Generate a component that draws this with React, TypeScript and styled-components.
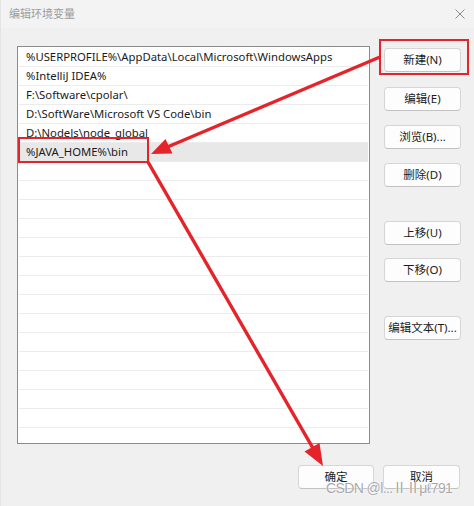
import React from "react";
import styled, { createGlobalStyle } from "styled-components";

const GlobalStyle = createGlobalStyle`
  html, body { margin: 0; padding: 0; background: #f0f0f0; }
  * { box-sizing: border-box; }
`;

const Window = styled.div`
  position: relative;
  width: 474px;
  height: 506px;
  overflow: hidden;
  background: #f0f0f0;
  border-left: 1px solid #e4e4e4;
  font-family: "Noto Sans", "Noto Sans CJK SC", sans-serif;
`;

const TitleBar = styled.div`
  height: 28px;
  display: flex;
  align-items: center;
  justify-content: space-between;
  padding: 0 9px 2px 8px;
  background: #f3f3f3;
`;

const Title = styled.span`
  font-family: "Noto Sans CJK SC", sans-serif;
  font-size: 11px;
  color: #9c9c9c;
`;

const CloseIcon = styled.svg`
  width: 10px;
  height: 10px;
  margin-top: 1px;
`;

const Content = styled.div`
  display: flex;
  gap: 14px;
  padding: 18px 0 0 16px;
`;

const ListBox = styled.div`
  width: 353px;
  height: 398px;
  border: 1px solid #8c8c8c;
  background: #ffffff;
  padding: 1px 1px;
  overflow: hidden;
`;

const Row = styled.div<{ $selected?: boolean }>`
  height: 19px;
  line-height: 18px;
  padding-left: 7px;
  border-bottom: 1px solid #ececec;
  font-size: 11.3px;
  color: #1a1a1a;
  white-space: nowrap;
  background: ${(p) => (p.$selected ? "#e8e8e8" : "#ffffff")};
`;

const ButtonColumn = styled.div`
  display: flex;
  flex-direction: column;
  width: 77px;
  padding-top: 2px;
`;

const DlgButton = styled.button<{ $mt?: number; $w?: number }>`
  width: ${(p) => p.$w ?? 77}px;
  height: 24px;
  margin-top: ${(p) => p.$mt ?? 0}px;
  background: #fdfdfd;
  border: 1px solid #d6d6d6;
  border-bottom-color: #c2c2c2;
  border-radius: 4px;
  font-family: "Noto Sans", "Noto Sans CJK SC", sans-serif;
  font-size: 11.5px;
  color: #1b1b1b;
  padding: 0;
  line-height: 22px;
`;

const Footer = styled.div`
  display: flex;
  justify-content: flex-end;
  gap: 9px;
  padding: 21px 14px 0 0;
`;

const Overlay = styled.svg`
  position: absolute;
  left: 0;
  top: 0;
  pointer-events: none;
`;

const Watermark = styled.div`
  position: absolute;
  left: 325px;
  top: 480px;
  font-family: "Liberation Sans", "Noto Sans CJK SC", sans-serif;
  font-size: 14px;
  line-height: 17px;
  letter-spacing: -0.6px;
  color: rgba(110, 110, 110, 0.6);
  text-shadow: 0 0 1px #ffffff, 0 0 2px #ffffff;
  white-space: nowrap;
`;

const paths = [
  "%USERPROFILE%\\AppData\\Local\\Microsoft\\WindowsApps",
  "%IntelliJ IDEA%",
  "F:\\Software\\cpolar\\",
  "D:\\SoftWare\\Microsoft VS Code\\bin",
  "D:\\NodeJs\\node_global",
  "%JAVA_HOME%\\bin",
];

const RED = "#e5232b";

export default function App() {
  const rows = [...paths, ...Array(16).fill("")];
  return (
    <>
      <GlobalStyle />
      <Window>
        <TitleBar>
          <Title>编辑环境变量</Title>
          <CloseIcon viewBox="0 0 10 10">
            <path d="M0.5 0.5 L9.5 9.5 M9.5 0.5 L0.5 9.5" stroke="#8a8a8a" strokeWidth="1" />
          </CloseIcon>
        </TitleBar>
        <Content>
          <ListBox>
            {rows.map((r, i) => (
              <Row key={i} $selected={i === 5}>
                {r}
              </Row>
            ))}
          </ListBox>
          <ButtonColumn>
            <DlgButton>新建(N)</DlgButton>
            <DlgButton $mt={15}>编辑(E)</DlgButton>
            <DlgButton $mt={14}>浏览(B)...</DlgButton>
            <DlgButton $mt={14}>删除(D)</DlgButton>
            <DlgButton $mt={34}>上移(U)</DlgButton>
            <DlgButton $mt={13}>下移(O)</DlgButton>
            <DlgButton $mt={34}>编辑文本(T)...</DlgButton>
          </ButtonColumn>
        </Content>
        <Footer>
          <DlgButton $w={76}>确定</DlgButton>
          <DlgButton>取消</DlgButton>
        </Footer>
        <Watermark>CSDN @l...ⅡⅡμℓ791</Watermark>
        <Overlay width="474" height="506" viewBox="0 0 474 506">
          <rect x="379" y="40" width="88" height="34" fill="none" stroke={RED} strokeWidth="2" />
          <rect x="18" y="138" width="129" height="24" fill="none" stroke={RED} strokeWidth="2" />
          <line x1="379" y1="57" x2="164" y2="148" stroke={RED} strokeWidth="3.5" />
          <polygon points="150,154 171.5,153.5 164.5,139" fill={RED} />
          <line x1="147" y1="162" x2="313" y2="450" stroke={RED} strokeWidth="3.5" />
          <polygon points="322,466 318.5,443 303.5,451.5" fill={RED} />
        </Overlay>
      </Window>
    </>
  );
}
